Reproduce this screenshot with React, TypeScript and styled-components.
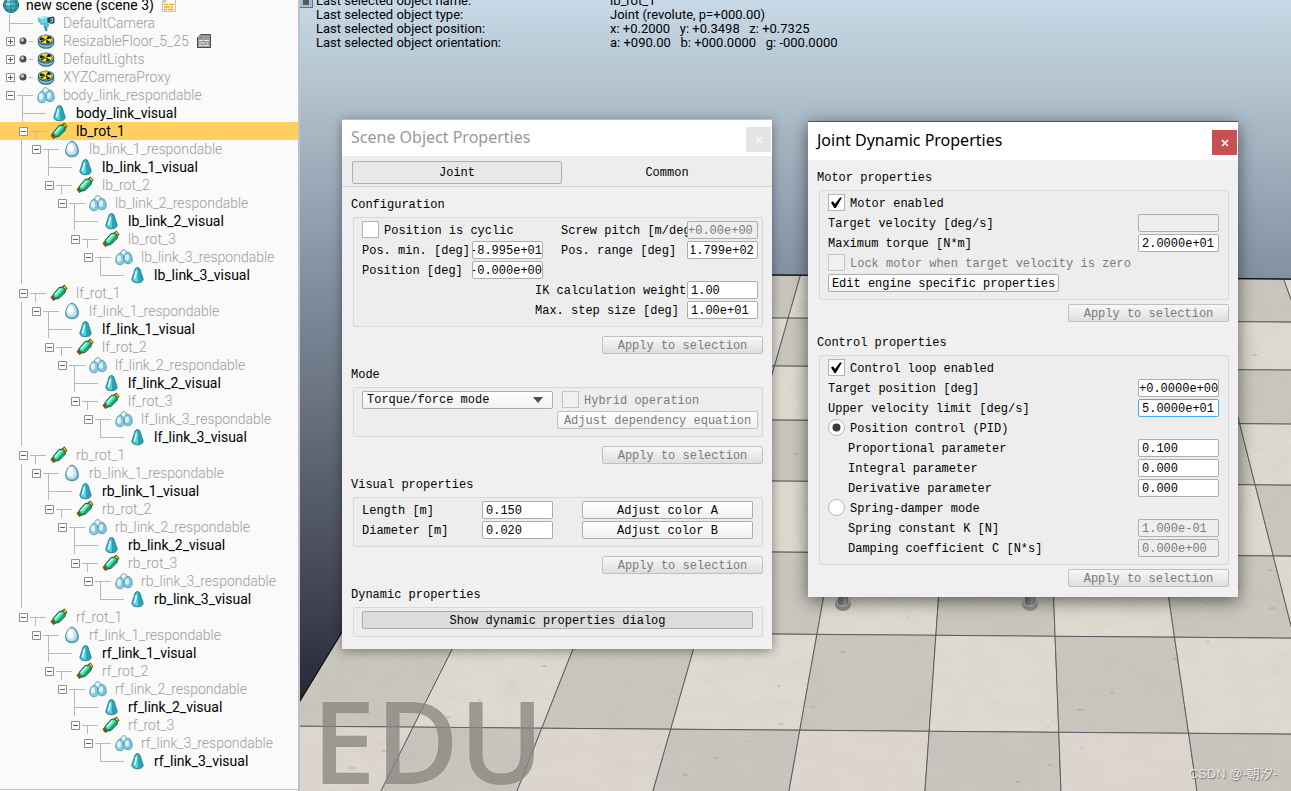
import React, { useEffect, useId, useRef } from "react";
import styled, { createGlobalStyle, css } from "styled-components";

const GlobalStyle = createGlobalStyle`
  * { box-sizing: border-box; }
  body { margin: 0; background: #fafafa; }
`;

const MONO = `"Liberation Mono", "Courier New", monospace`;
const HUD_FONT = `Roboto, "Liberation Sans", sans-serif`;

/* ---------- page ---------- */

const Page = styled.div`
  display: flex;
  height: 100vh;
  min-height: 780px;
  overflow: hidden;
`;

const Sidebar = styled.nav`
  flex: 0 0 300px;
  padding-bottom: 1px;
  background: #fafafa;
  border-right: 2px solid #c0c1c4;
  overflow: hidden;
`;

const Tree = styled.ul`
  display: flow-root;
  height: 100%;
  margin: 0;
  padding: 0;
  list-style: none;
  border-bottom: 1px solid #c0c1c4;
`;

const Row = styled.li<{ $selected?: boolean; $muted?: boolean }>`
  display: flex;
  align-items: center;
  height: 18px;
  background: ${(p) => (p.$selected ? "#ffd060" : "transparent")};
  color: ${(p) => (p.$muted ? "#9c9c9c" : "#000")};
  font: ${(p) => (p.$muted ? 300 : 400)} 14px/18px ${HUD_FONT};
  white-space: nowrap;
`;

const SceneRow = styled(Row)`
  margin-top: -4px;
  padding-left: 2px;
`;

const Indent = styled.span<{ $depth: number; $rail: boolean }>`
  flex: none;
  align-self: stretch;
  width: ${(p) => p.$depth * 13}px;
  ${(p) =>
    p.$rail &&
    css`
      background: linear-gradient(#b8b8b8, #b8b8b8) 21px 0 / 1px 100% no-repeat;
    `}
`;

const Toggle = styled.button`
  flex: none;
  display: block;
  width: 9px;
  height: 9px;
  margin: 0 2px 0 6px;
  padding: 0;
  border: 0;
  background: none;
  svg { display: block; }
`;

const TreeIcon = styled.span`
  flex: none;
  width: 18px;
  height: 18px;
  svg { display: block; }
`;

const Name = styled.span<{ $tight?: boolean }>`
  margin: 0 8px 0 ${(p) => (p.$tight ? 6 : 8)}px;
`;

type IconKind = "camera" | "dummy" | "eggs" | "egg" | "cone" | "joint";

const Camera = () => (
  <svg width="18" height="18" viewBox="0 0 18 18">
    <path d="M1 3.500L9 2l2 2 .5 5.500L4 11 1 6.500z" fill="#4fb9cf" />
    <path d="M1 3.500L9 2l1.500 2L3 5.500z" fill="#b4f1f7" />
    <path d="M3 5.500L10.500 4v4.500l-6 1.500z" fill="#6fd3e2" />
    <path d="M10.500 3.500l6-1 1 1.500v5l-3 1-4-1.500z" fill="#1d4a5c" />
    <path d="M13 4.500l3-.8v4.500l-3 .8z" fill="#7ec7d8" />
    <path d="M14 4.500v4" stroke="#1d4a5c" />
    <path d="M6 10.500l6-1v3l-1.500 1-.5 3.500-2 .5-1-4.500z" fill="#57bccd" />
    <path d="M7 12.500l1.800 1L10 17" stroke="#1d7484" fill="none" />
  </svg>
);

const Dummy = () => (
  <svg width="18" height="18" viewBox="0 0 18 18">
    <ellipse cx="9" cy="10.500" rx="8.400" ry="6.300" fill="#2f6278" />
    <ellipse cx="9" cy="10" rx="7.800" ry="5.600" fill="#8dc2d8" />
    <ellipse cx="9" cy="8" rx="8.300" ry="5.600" fill="#2a5566" />
    <ellipse cx="9" cy="7.600" rx="7.400" ry="4.800" fill="#8fc3d6" />
    <ellipse cx="9" cy="7.600" rx="6.300" ry="4.100" fill="#1b1b12" />
    <path d="M9 7.600L4.600 4.600Q6.500 3.400 9 3.500L11 3.700zM9 7.600l5.900-1.400q.8 2.400-1.300 4zM9 7.600l.6 4q-3.200.2-4.800-1.400zM9 7.600L3.300 9Q2.300 6.800 4.600 4.600z" fill="#f3df1d" />
    <path d="M9 7.600L4 5q-1.500 1.500-1 3z" fill="#1b1b12" />
  </svg>
);

const eggPath = "M0-5C2.400-5 4-1 4 1.400 4 3.800 2.200 5 0 5S-4 3.800-4 1.400C-4-1-2.400-5 0-5z";

const Eggs = () => (
  <svg width="18" height="18" viewBox="0 0 18 18">
    <g stroke="#4f8fa3" strokeWidth=".7">
      <path transform="translate(8.800 6.500)" d={eggPath} fill="#c5e6ef" />
      <path transform="translate(5 11) scale(1.080 1.150)" d={eggPath} fill="#8accdf" />
      <path transform="translate(13 10) scale(1.080 1.150)" d={eggPath} fill="#7cc3d8" />
    </g>
    <ellipse cx="4" cy="10.500" rx="2" ry="3.300" fill="#dff6fb" />
    <ellipse cx="12" cy="9.500" rx="2" ry="3.300" fill="#d6f2f9" />
    <ellipse cx="8.500" cy="4.500" rx="1.300" ry="1.800" fill="#f2fcff" />
  </svg>
);

const Egg = () => (
  <svg width="18" height="18" viewBox="0 0 18 18">
    <path transform="translate(9 9) scale(1.600 1.550)" d={eggPath} fill="#6fb3cd" stroke="#3a7387" strokeWidth=".5" />
    <path transform="translate(8.500 8.500) scale(1.300)" d={eggPath} fill="#bfe4f2" />
    <ellipse cx="7.500" cy="8" rx="3" ry="4.600" fill="#fafeff" />
  </svg>
);

const Cone = () => (
  <svg width="18" height="18" viewBox="0 0 18 18">
    <path d="M9.500 1.500c2 0 3 2 3.500 5l2.200 6.500c0 2.600-2.600 3.800-5.700 3.800s-5.700-1.200-5.700-3.800L6 6.500c.5-3 1.500-5 3.500-5z" fill="#29a3b6" stroke="#1c6577" strokeWidth=".7" />
    <path d="M9.500 2.300C7.500 3 7 6.500 6.300 9L4.700 13.500c.8 1.700 2.800 2.400 5.300 2.400z" fill="#5ed2df" />
    <path d="M8.500 5L6.500 13" stroke="#d0fafe" strokeWidth="1.700" fill="none" />
  </svg>
);

const Joint = () => (
  <svg width="18" height="18" viewBox="0 0 18 18">
    <path d="M2 15l4-3M12 6l4-3.500" stroke="#5c4a00" strokeWidth="5" />
    <path d="M2 15l4-3.500M12 6l3.500-3" stroke="#f4c60f" strokeWidth="3.200" />
    <path d="M1.500 13l2.500 3" stroke="#a2440f" strokeWidth="2" />
    <path d="M3 10.500L9 3.500l3.500-.5 3 2.500-.5 3L9 14.500l-3.500.5L3 13z" fill="#1fa273" stroke="#10503c" strokeWidth=".9" />
    <path d="M3.800 10.800L9.500 4.200l2.700-.4 1.400 1.400L7.500 12.500 5 13z" fill="#4fe8ac" />
    <path d="M5 10.800L10.500 4.800" stroke="#c8ffe9" strokeWidth="1.600" />
  </svg>
);

const Globe = () => (
  <svg width="18" height="18" viewBox="0 0 18 18">
    <circle cx="9" cy="9" r="7.500" fill="#45aebd" stroke="#1d5c6a" />
    <circle cx="7" cy="7" r="3.500" fill="#8fdee6" />
    <path d="M2 6h14M1.500 10h15M3 14h12M9 1.500v15M5 3q-3 6 0 12M13 3q3 6 0 12" stroke="#21707f" strokeWidth=".8" fill="none" />
  </svg>
);

const Note = ({ tone }: { tone: "orange" | "gray" }) => {
  const o = tone === "orange";
  return (
    <svg width="14" height="14" viewBox="0 0 14 14">
      <path d="M4 .5h9.500v13H.5V4z" fill={o ? "#fff" : "#9a9a9a"} stroke={o ? "#c8c0b0" : "#4c4c4c"} />
      <path d="M.5 4H4V.5z" fill={o ? "#e8e4dc" : "#e4e4e4"} stroke={o ? "#b0a890" : "#4c4c4c"} strokeWidth=".7" />
      <path
        d="M2 6.500h4M7 6.500h5M2 9h6M9 9h2M2 11.500h3M6 11.500h6"
        stroke={o ? "#f5a800" : "#e6e6e6"} strokeWidth={o ? 1.6 : 1}
      />
    </svg>
  );
};

const icons: Record<IconKind, () => React.JSX.Element> = {
  camera: Camera, dummy: Dummy, eggs: Eggs, egg: Egg, cone: Cone, joint: Joint,
};

type Node = {
  name: string;
  icon: IconKind;
  depth: number;
  toggle?: "plus" | "minus";
  visual?: boolean;
  last?: boolean;
  rail?: boolean;
  note?: boolean;
};

const leg = (id: string, rail: boolean): Node[] => [
  { name: `${id}_rot_1`, icon: "joint", depth: 1, toggle: "minus" },
  { name: `${id}_link_1_respondable`, icon: "egg", depth: 2, toggle: "minus", rail },
  { name: `${id}_link_1_visual`, icon: "cone", depth: 3, visual: true, rail },
  { name: `${id}_rot_2`, icon: "joint", depth: 3, toggle: "minus", rail },
  { name: `${id}_link_2_respondable`, icon: "eggs", depth: 4, toggle: "minus", rail },
  { name: `${id}_link_2_visual`, icon: "cone", depth: 5, visual: true, rail },
  { name: `${id}_rot_3`, icon: "joint", depth: 5, toggle: "minus", rail },
  { name: `${id}_link_3_respondable`, icon: "eggs", depth: 6, toggle: "minus", rail },
  { name: `${id}_link_3_visual`, icon: "cone", depth: 7, visual: true, last: true, rail },
];

const nodes: Node[] = [
  { name: "DefaultCamera", icon: "camera", depth: 0 },
  { name: "ResizableFloor_5_25", icon: "dummy", depth: 0, toggle: "plus", note: true },
  { name: "DefaultLights", icon: "dummy", depth: 0, toggle: "plus" },
  { name: "XYZCameraProxy", icon: "dummy", depth: 0, toggle: "plus" },
  { name: "body_link_respondable", icon: "eggs", depth: 0, toggle: "minus" },
  { name: "body_link_visual", icon: "cone", depth: 1, visual: true },
  ...leg("lb", true),
  ...leg("lf", true),
  ...leg("rb", true),
  ...leg("rf", false),
];

const SELECTED = "lb_rot_1";

const BranchLines = styled.svg`
  flex: none;
`;

const Branch = ({ node }: { node: Node }) => {
  if (!node.toggle) {
    return (
      <BranchLines width="37" height="18" viewBox="0 0 37 18">
        <path d={`M9.500 0V${node.last ? 9.5 : 18}M9 9.500H33`} stroke="#b8b8b8" fill="none" />
      </BranchLines>
    );
  }
  return (
    <>
      <Toggle aria-label={node.toggle === "plus" ? "Expand" : "Collapse"}>
        <svg width="9" height="9" viewBox="0 0 9 9">
          <path d="M.5.5h8v8h-8z" fill="#fff" stroke="#909090" />
          <path d={node.toggle === "plus" ? "M2 4.500h5M4.500 2v5" : "M2 4.500h5"} stroke="#606060" />
        </svg>
      </Toggle>
      <BranchLines width="20" height="18" viewBox="0 0 20 18">
        {node.toggle === "plus" ? (
          <>
            <circle cx="6" cy="9" r="3.500" fill="#4a4a4a" />
            <circle cx="5.300" cy="8" r="1.800" fill="#c8c8c8" />
            <path d="M12 9.500h4" stroke="#b8b8b8" />
          </>
        ) : (
          <path d="M0 9.500h16M5.500 9v9" stroke="#b8b8b8" fill="none" />
        )}
      </BranchLines>
    </>
  );
};

const SceneTree = () => (
  <Sidebar aria-label="Scene hierarchy">
    <Tree>
      <SceneRow>
        <TreeIcon><Globe /></TreeIcon>
        <Name $tight>new scene (scene 3)</Name>
        <Note tone="orange" />
      </SceneRow>
      {nodes.map((n) => {
        const Icon = icons[n.icon];
        const selected = n.name === SELECTED;
        return (
          <Row key={n.name} $selected={selected} $muted={!n.visual && !selected}>
            <Indent $depth={n.depth} $rail={!!n.rail} />
            <Branch node={n} />
            <TreeIcon><Icon /></TreeIcon>
            <Name>{n.name}</Name>
            {n.note && <Note tone="gray" />}
          </Row>
        );
      })}
    </Tree>
  </Sidebar>
);

/* ---------- 3D view ---------- */

const Viewport = styled.main`
  position: relative;
  flex: 1;
  min-width: 0;
  overflow: hidden;
`;

const Backdrop = styled.svg`
  display: block;
  width: 100%;
  height: 100%;
`;

const Hud = styled.div`
  position: absolute;
  top: -6px;
  left: 0;
  display: flex;
  gap: 3px;
  color: #000;
  font: 400 13px/14px ${HUD_FONT};
  white-space: pre;
`;

const HudToggle = styled.button`
  width: 13px;
  height: 14px;
  padding: 0;
  border: 1px solid #5c6e9c;
  border-width: 0 1px 1px 0;
  background: #a9b8dc;
  &::before {
    content: "";
    display: block;
    width: 6px;
    height: 6px;
    margin: 3px 3px 0;
    background: #585858;
  }
`;

const HudGrid = styled.dl`
  display: grid;
  grid-template-columns: 294px auto;
  margin: 0;
  dd { margin: 0; }
`;

const Edu = styled.div`
  position: absolute;
  left: 12px;
  bottom: -27px;
  color: rgba(88, 86, 80, 0.52);
  font: 600 114px/156px "Open Sans", sans-serif;
  text-shadow: 0 0 2px rgba(240, 238, 230, 0.5);
`;

const Watermark = styled.div`
  position: absolute;
  right: 14px;
  bottom: 7px;
  color: #e9e7e3;
  font: 400 13px/20px "Liberation Sans", "Noto Sans CJK SC", sans-serif;
  text-shadow: 1px 1px 1px #77736d;
`;

/* Perspective floor: column lines fan out from the vanishing point. */
const colX = (k: number, y: number) => -55 + 136 * k + (791 - y) * (0.61 - 0.108 * k);
const rows = [275, 318, 366, 420, 481, 552, 634, 730, 850];
const rowY = (r: number, x: number) => rows[r] + 0.008 * (x - 472);
const corner = (k: number, r: number) => {
  const x = colX(k, rows[r]);
  const y = rowY(r, x);
  return [colX(k, y), y];
};
const pt = (k: number, r: number) => corner(k, r).map((v) => v.toFixed(1)).join(" ");

const tiles: { d: string; fill: string }[] = [];
for (let r = 0; r < rows.length - 1; r++) {
  for (let k = 0; k < 12; k++) {
    const light = (k + r) % 2 === 1;
    const warm = r === 7;
    tiles.push({
      d: `M${pt(k, r)}L${pt(k + 1, r)}L${pt(k + 1, r + 1)}L${pt(k, r + 1)}z`,
      fill: light ? (warm ? "#dcd6cf" : "#dedad0") : warm ? "#c8c4be" : "#c9c6bd",
    });
  }
}

const specks = Array.from({ length: 90 }, (_, i) => ({
  x: 20 + ((i * 617) % 965),
  y: 300 + ((i * 263) % 485),
  w: 1 + (i % 3),
})).filter((s) => s.x > colX(0, s.y) + 8);

const LegFoot = ({ x }: { x: number }) => (
  <g>
    <ellipse cx={x} cy="604" rx="8" ry="7" fill="#8f8f8f" />
    <ellipse cx={x} cy="602" rx="7" ry="5" fill="#b4b4b4" />
    <rect x={x - 5} y="594" width="10" height="11" rx="2" fill="#808080" />
    <rect x={x} y="594" width="4" height="11" fill="#9a9a9a" />
  </g>
);

const Floor = () => (
  <Backdrop viewBox="0 0 991 791" preserveAspectRatio="xMidYMid slice" aria-hidden="true">
    <defs>
      <linearGradient id="sky" x1="0" y1="0" x2="0" y2="1">
        <stop offset="0" stopColor="#c8dae7" />
        <stop offset=".16" stopColor="#a9b8c5" />
        <stop offset=".35" stopColor="#8290a0" />
        <stop offset=".76" stopColor="#40434f" />
        <stop offset=".9" stopColor="#222435" />
      </linearGradient>
      <filter id="grain" x="0" y="0" width="100%" height="100%">
        <feTurbulence type="fractalNoise" baseFrequency=".03 .05" numOctaves="4" seed="4" />
        <feColorMatrix values="0 0 0 0 .5  0 0 0 0 .46  0 0 0 0 .38  0 0 0 1.600 -.6" />
      </filter>
      <clipPath id="floorClip">
        <path d={`M${pt(0, 0)}L${pt(12, 0)}L${pt(12, 8)}L${pt(0, 8)}z`} />
      </clipPath>
    </defs>
    <rect width="991" height="791" fill="url(#sky)" />
    {tiles.map((t, i) => (
      <path key={i} d={t.d} fill={t.fill} stroke="#55575c" strokeWidth=".9" />
    ))}
    <g clipPath="url(#floorClip)">
      <rect width="991" height="791" filter="url(#grain)" opacity=".16" />
    </g>
    {specks.map((s, i) => (
      <ellipse key={i} cx={s.x} cy={s.y} rx={s.w} ry="1" fill="#8f8763" opacity=".3" />
    ))}
    <path d={`M${pt(12, 0)}L${pt(0, 0)}L${pt(0, 8)}`} fill="none" stroke="#0c0c10" strokeWidth="1.200" />
    <LegFoot x={543} />
    <LegFoot x={730} />
  </Backdrop>
);

/* ---------- dialogs ---------- */

const Dialog = styled.section<{ $x: number; $y: number; $active?: boolean }>`
  position: absolute;
  left: ${(p) => p.$x}px;
  top: ${(p) => p.$y}px;
  width: 430px;
  background: #f0f0f0;
  border-top: 1px solid ${(p) => (p.$active ? "#50555a" : "#b4bfca")};
  box-shadow: 0 ${(p) => (p.$active ? "4px 16px" : "2px 10px")} rgba(0, 0, 0, ${(p) => (p.$active ? 0.55 : 0.4)});
  color: #000;
  font: 12px/18px ${MONO};
`;

const TitleBar = styled.header<{ $active?: boolean }>`
  display: flex;
  justify-content: space-between;
  align-items: flex-start;
  height: ${(p) => (p.$active ? 38 : 36)}px;
  padding: ${(p) => (p.$active ? 8 : 7)}px 1px 0 9px;
  background: #fff;
  color: ${(p) => (p.$active ? "#000" : "#999")};
`;

const Title = styled.h2`
  margin: 0;
  font: 400 16px/20px "Noto Sans", "Open Sans", sans-serif;
`;

const Close = styled.button<{ $active?: boolean }>`
  display: grid;
  place-items: center;
  width: 25px;
  height: 25px;
  padding: 0;
  border: 0;
  background: ${(p) => (p.$active ? "#c75050" : "#e4e4e4")};
  color: ${(p) => (p.$active ? "#fff" : "#f6f6f6")};
`;

const Tabs = styled.div`
  display: grid;
  grid-template-columns: 1fr 1fr;
  height: 31px;
  padding: 5px 0 2px 10px;
  border-bottom: 1px solid #d2d2d2;
  background: #ededed;
`;

const Tab = styled.button<{ $on?: boolean }>`
  height: 23px;
  padding: 1px 0 0;
  border: 1px solid ${(p) => (p.$on ? "#b0b0b0" : "transparent")};
  border-radius: 2px;
  background: ${(p) => (p.$on ? "#e8e8e8" : "transparent")};
  color: #000;
  font: 12px/18px ${MONO};
`;

const SectionTitle = styled.h3`
  margin: 0;
  padding: 9px 9px 3px;
  font: 400 12px/18px ${MONO};
`;

const Group = styled.div`
  margin: 0 9px 0 11px;
  padding: 2px 0 6px 8px;
  border: 1px solid #d9d9d9;
  border-radius: 2px;
  background: #ededed;
`;

const Line = styled.div<{ $end?: number; $indent?: boolean }>`
  display: flex;
  align-items: center;
  height: 20px;
  padding-right: ${(p) => p.$end ?? 9}px;
  padding-left: ${(p) => (p.$indent ? 20 : 0)}px;
  white-space: nowrap;
`;

const Spacer = styled.span`
  flex: 1;
`;

const Gap = styled.span<{ $w: number }>`
  flex: 0 0 ${(p) => p.$w}px;
`;

const Label = styled.label<{ $w?: number; $muted?: boolean }>`
  flex: none;
  width: ${(p) => (p.$w ? `${p.$w}px` : "auto")};
  padding-top: 2px;
  overflow: hidden;
  color: ${(p) => (p.$muted ? "#7b7b7b" : "#000")};
`;

const Field = styled.input<{ $w: number; $tight?: boolean; $focused?: boolean }>`
  flex: none;
  width: ${(p) => p.$w}px;
  height: 18px;
  padding: 1px ${(p) => (p.$tight ? 0 : 3)}px 0;
  border: 1px solid ${(p) => (p.$focused ? "#3daefd" : "#aeaeae")};
  border-radius: 2px;
  outline: 0;
  background: #fff;
  color: #000;
  font: 12px/15px ${MONO};
  &:disabled {
    background: #eee;
    color: #7b7b7b;
  }
`;

const Push = styled.button<{ $w?: number; $pressed?: boolean }>`
  flex: ${(p) => (p.$w ? "none" : 1)};
  width: ${(p) => (p.$w ? `${p.$w}px` : "auto")};
  height: 18px;
  padding: 2px 0 0;
  border: 1px solid #adadad;
  border-radius: 2px;
  background: ${(p) => (p.$pressed ? "#dcdcdc" : "linear-gradient(#fff, #f1f1f1)")};
  color: #000;
  font: 12px/14px ${MONO};
  &:disabled {
    border-color: #c0c0c0;
    color: #7b7b7b;
  }
`;

const ApplyButton = styled(Push)`
  background: linear-gradient(#f8f8f8, #dedede);
`;

const ApplyRow = styled.div<{ $compact?: boolean }>`
  display: flex;
  justify-content: flex-end;
  padding: ${(p) => (p.$compact ? "4px 9px 3px" : "9px 9px 3px")};
`;

const DialogFoot = styled.div<{ $h: number }>`
  height: ${(p) => p.$h}px;
`;

const BoxWrap = styled.span`
  position: relative;
  flex: none;
  width: 17px;
  height: 17px;
  margin-right: 5px;
  margin-bottom: 1px;
  input {
    display: block;
    width: 17px;
    height: 17px;
    margin: 0;
    appearance: none;
    border: 1px solid #b4b4b4;
    background: #fff;
  }
  input[type="radio"] { border-radius: 50%; }
  input:disabled { background: #f0f0f0; border-color: #c6c6c6; }
  svg {
    position: absolute;
    inset: 0;
    pointer-events: none;
  }
`;

const SelectWrap = styled.span`
  position: relative;
  flex: none;
  width: 191px;
  height: 18px;
  margin-right: 9px;
  select {
    display: block;
    width: 100%;
    height: 18px;
    padding: 1px 4px 0;
    appearance: none;
    border: 1px solid #adadad;
    border-radius: 2px;
    background: linear-gradient(#fff, #f1f1f1);
    color: #000;
    font: 12px/15px ${MONO};
  }
  svg {
    position: absolute;
    top: 6px;
    right: 10px;
    pointer-events: none;
  }
`;

const NumberBox = (props: {
  id: string; value: string; w: number; tight?: boolean; disabled?: boolean; focused?: boolean;
}) => {
  const ref = useRef<HTMLInputElement>(null);
  // Values longer than the box show their last digits.
  useEffect(() => {
    if (ref.current) ref.current.scrollLeft = ref.current.scrollWidth;
  }, [props.value]);
  return (
    <Field
      ref={ref} id={props.id} type="text" defaultValue={props.value} disabled={props.disabled}
      $w={props.w} $tight={props.tight} $focused={props.focused}
    />
  );
};

const Pair = (props: {
  label: string; value: string; labelW: number; w: number; tight?: boolean; disabled?: boolean;
}) => {
  const id = useId();
  return (
    <>
      <Label htmlFor={id} $w={props.labelW}>{props.label}</Label>
      <NumberBox id={id} value={props.value} w={props.w} tight={props.tight} disabled={props.disabled} />
    </>
  );
};

const WideLine = (props: {
  label: string; value: string; indent?: boolean; tight?: boolean; disabled?: boolean; focused?: boolean;
}) => {
  const id = useId();
  return (
    <Line $indent={props.indent}>
      <Label htmlFor={id}>{props.label}</Label>
      <Spacer />
      <NumberBox
        id={id} value={props.value} w={81} tight={props.tight}
        disabled={props.disabled} focused={props.focused}
      />
    </Line>
  );
};

const Choice = (props: {
  label: string; type: "checkbox" | "radio"; checked?: boolean; disabled?: boolean;
}) => {
  const id = useId();
  return (
    <>
      <BoxWrap>
        <input
          id={id} type={props.type} defaultChecked={props.checked} disabled={props.disabled}
          name={props.type === "radio" ? "control-mode" : undefined}
        />
        {props.checked && (
          <svg width="17" height="17" viewBox="0 0 17 17">
            {props.type === "radio" ? (
              <circle cx="8.500" cy="8.500" r="4" fill="#3b3b3b" />
            ) : (
              <path d="M3 8.500l2-1.200L7 10l5-6.500h2L7.800 14H6.300z" fill="#000" />
            )}
          </svg>
        )}
      </BoxWrap>
      <Label htmlFor={id} $muted={props.disabled}>{props.label}</Label>
    </>
  );
};

const CloseButton = ({ active }: { active?: boolean }) => (
  <Close $active={active} aria-label="Close">
    <svg width="8" height="8" viewBox="0 0 8 8">
      <path d="M1 1l6 6M7 1L1 7" stroke="currentColor" strokeWidth="1.700" />
    </svg>
  </Close>
);

const Apply = ({ compact }: { compact?: boolean }) => (
  <ApplyRow $compact={compact}>
    <ApplyButton $w={161} disabled>Apply to selection</ApplyButton>
  </ApplyRow>
);

const ObjectProperties = () => (
  <Dialog $x={42} $y={119} aria-label="Scene Object Properties">
    <TitleBar>
      <Title>Scene Object Properties</Title>
      <CloseButton />
    </TitleBar>
    <Tabs role="tablist">
      <Tab role="tab" aria-selected="true" $on>Joint</Tab>
      <Tab role="tab" aria-selected="false">Common</Tab>
    </Tabs>

    <SectionTitle>Configuration</SectionTitle>
    <Group>
      <Line $end={4}>
        <Choice type="checkbox" label="Position is cyclic" />
        <Spacer />
        <Pair label="Screw pitch [m/deg]" value="+0.00e+00" labelW={126} w={71} tight disabled />
      </Line>
      <Line $end={4}>
        <Pair label="Pos. min. [deg]" value="-8.995e+01" labelW={110} w={71} tight />
        <Spacer />
        <Pair label="Pos. range [deg]" value="1.799e+02" labelW={126} w={71} />
      </Line>
      <Line $end={4}>
        <Pair label="Position [deg]" value="-0.000e+00" labelW={110} w={71} tight />
      </Line>
      <Line $end={4}>
        <Spacer />
        <Pair label="IK calculation weight" value="1.00" labelW={152} w={71} />
      </Line>
      <Line $end={4}>
        <Spacer />
        <Pair label="Max. step size [deg]" value="1.00e+01" labelW={152} w={71} />
      </Line>
    </Group>
    <Apply />

    <SectionTitle>Mode</SectionTitle>
    <Group>
      <Line $end={4}>
        <SelectWrap>
          <select aria-label="Joint mode" defaultValue="torque">
            <option value="torque">Torque/force mode</option>
          </select>
          <svg width="10" height="6" viewBox="0 0 10 6"><path d="M0 0h10L5 6z" fill="#4d4d4d" /></svg>
        </SelectWrap>
        <Choice type="checkbox" label="Hybrid operation" disabled />
      </Line>
      <Line $end={4}>
        <Spacer />
        <Push $w={201} disabled>Adjust dependency equation</Push>
      </Line>
    </Group>
    <Apply />

    <SectionTitle>Visual properties</SectionTitle>
    <Group>
      <Line>
        <Pair label="Length [m]" value="0.150" labelW={120} w={71} />
        <Gap $w={29} />
        <Push>Adjust color A</Push>
      </Line>
      <Line>
        <Pair label="Diameter [m]" value="0.020" labelW={120} w={71} />
        <Gap $w={29} />
        <Push>Adjust color B</Push>
      </Line>
    </Group>
    <Apply />

    <SectionTitle>Dynamic properties</SectionTitle>
    <Group>
      <Line>
        <Push $pressed>Show dynamic properties dialog</Push>
      </Line>
    </Group>
    <DialogFoot $h={12} />
  </Dialog>
);

const DynamicProperties = () => (
  <Dialog $x={508} $y={121} $active aria-label="Joint Dynamic Properties">
    <TitleBar $active>
      <Title>Joint Dynamic Properties</Title>
      <CloseButton active />
    </TitleBar>

    <SectionTitle>Motor properties</SectionTitle>
    <Group>
      <Line><Choice type="checkbox" label="Motor enabled" checked /></Line>
      <WideLine label="Target velocity [deg/s]" value="" disabled />
      <WideLine label="Maximum torque [N*m]" value="2.0000e+01" />
      <Line><Choice type="checkbox" label="Lock motor when target velocity is zero" disabled /></Line>
      <Line><Push $w={231}>Edit engine specific properties</Push></Line>
    </Group>
    <Apply compact />

    <SectionTitle>Control properties</SectionTitle>
    <Group>
      <Line><Choice type="checkbox" label="Control loop enabled" checked /></Line>
      <WideLine label="Target position [deg]" value="+0.0000e+00" tight />
      <WideLine label="Upper velocity limit [deg/s]" value="5.0000e+01" focused />
      <Line><Choice type="radio" label="Position control (PID)" checked /></Line>
      <WideLine label="Proportional parameter" value="0.100" indent />
      <WideLine label="Integral parameter" value="0.000" indent />
      <WideLine label="Derivative parameter" value="0.000" indent />
      <Line><Choice type="radio" label="Spring-damper mode" /></Line>
      <WideLine label="Spring constant K [N]" value="1.000e-01" indent disabled />
      <WideLine label="Damping coefficient C [N*s]" value="0.000e+00" indent disabled />
    </Group>
    <Apply compact />
    <DialogFoot $h={7} />
  </Dialog>
);

export default function App() {
  return (
    <>
      <GlobalStyle />
      <Page>
        <SceneTree />
        <Viewport>
          <Floor />
          <Hud>
            <HudToggle aria-label="Toggle info text" />
            <HudGrid>
              <dt>Last selected object name:</dt>
              <dd>lb_rot_1</dd>
              <dt>Last selected object type:</dt>
              <dd>Joint (revolute, p=+000.00)</dd>
              <dt>Last selected object position:</dt>
              <dd>x: +0.2000   y: +0.3498   z: +0.7325</dd>
              <dt>Last selected object orientation:</dt>
              <dd>a: +090.00   b: +000.0000   g: -000.0000</dd>
            </HudGrid>
          </Hud>
          <Edu>EDU</Edu>
          <ObjectProperties />
          <DynamicProperties />
          <Watermark>CSDN @-朝汐-</Watermark>
        </Viewport>
      </Page>
    </>
  );
}
